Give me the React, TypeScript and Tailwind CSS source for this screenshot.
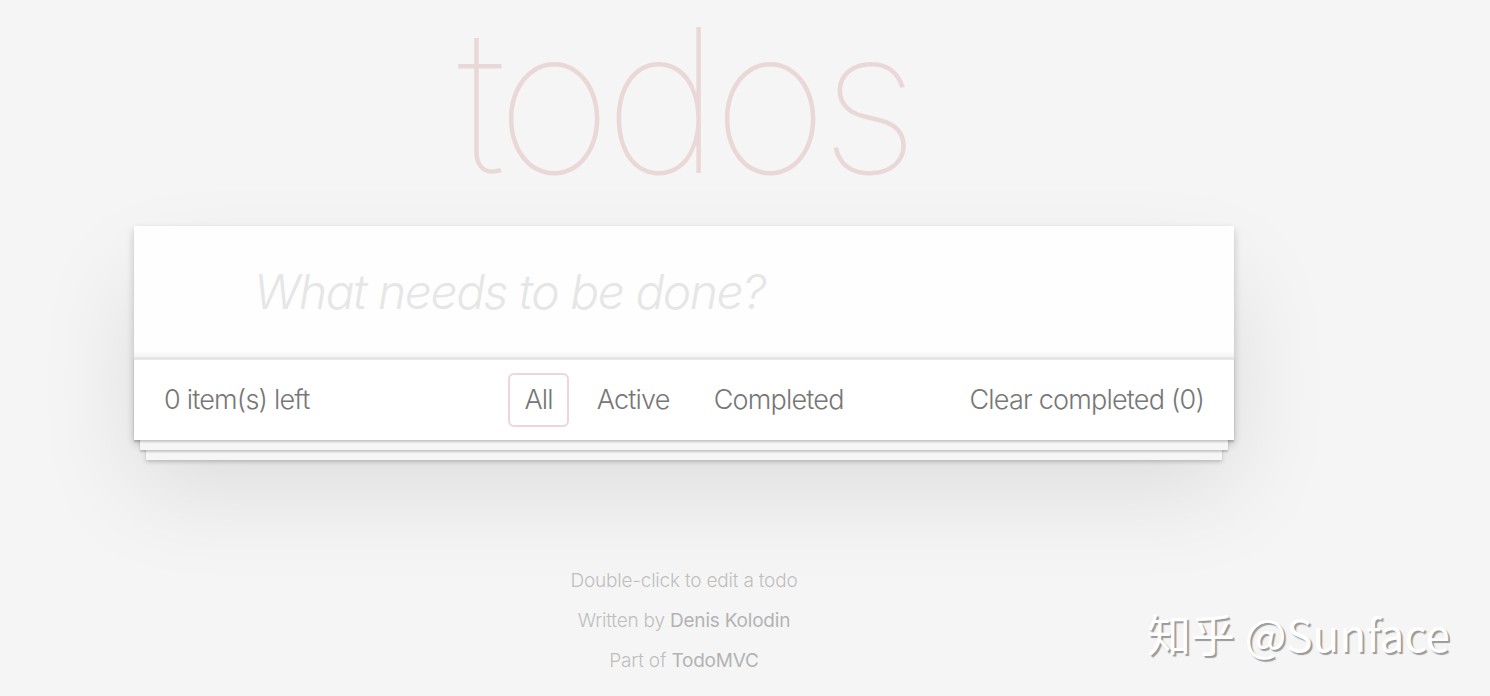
import React from "react";

const sans = "font-['Inter','Liberation_Sans',sans-serif]";

export default function App() {
  return (
    <div className={`relative min-h-[696px] w-full bg-[#f5f5f5] overflow-hidden ${sans}`}>
      <div className="ml-[134px] w-[1100px] flex flex-col">
        <h1 className="text-center text-[200px] leading-[242px] -mt-[21px] mb-[5px] font-thin text-[rgba(175,47,47,0.15)] tracking-[-8px]">
          todos
        </h1>

        <div className="bg-white shadow-[0_4px_8px_0_rgba(0,0,0,0.2),0_50px_100px_0_rgba(0,0,0,0.1)]">
          <input
            className="block w-full h-[131px] pl-[120px] pr-8 text-[48px] font-light italic tracking-[-1.5px] text-[#4d4d4d] placeholder:text-[#e6e6e6] outline-none bg-[rgba(0,0,0,0.003)] shadow-[inset_0_-4px_2px_rgba(0,0,0,0.03)]"
            placeholder="What needs to be done?"
          />
          <footer className="grid grid-cols-[1fr_auto_1fr] items-center h-[83px] px-[30px] border-t-[3px] border-[#e6e6e6] text-[27px] tracking-[-0.8px] font-light text-[#777] bg-white shadow-[0_2px_2px_rgba(0,0,0,0.2),0_16px_0_-6px_#f6f6f6,0_18px_2px_-6px_rgba(0,0,0,0.2),0_32px_0_-12px_#f6f6f6,0_34px_4px_-12px_rgba(0,0,0,0.2)]">
            <span>0 item(s) left</span>
            <ul className="flex items-center">
              <li className="mx-[6px]">
                <a className="block px-[14px] py-[5px] border-2 border-[rgba(175,47,47,0.2)] rounded-[6px]">All</a>
              </li>
              <li className="mx-[6px]">
                <a className="block px-[14px] py-[5px] border-2 border-transparent rounded-[6px]">Active</a>
              </li>
              <li className="mx-[6px]">
                <a className="block px-[14px] py-[5px] border-2 border-transparent rounded-[6px]">Completed</a>
              </li>
            </ul>
            <span className="text-right">Clear completed (0)</span>
          </footer>
        </div>

        <div className="mt-[131px] text-center text-[19px] leading-[20px] tracking-[-0.2px] font-light text-[#bfbfbf] flex flex-col gap-[20px]">
          <p>Double-click to edit a todo</p>
          <p>
            Written by <span className="font-normal text-[#b3b3b3]">Denis Kolodin</span>
          </p>
          <p>
            Part of <span className="font-normal text-[#b3b3b3]">TodoMVC</span>
          </p>
        </div>
      </div>

      <div className="absolute right-[40px] top-[605px] text-[44px] leading-[56px] font-normal text-white font-['Noto_Sans_CJK_SC',sans-serif] [text-shadow:2px_2px_1px_#9a9a9a]">
        知乎 @Sunface
      </div>
    </div>
  );
}
